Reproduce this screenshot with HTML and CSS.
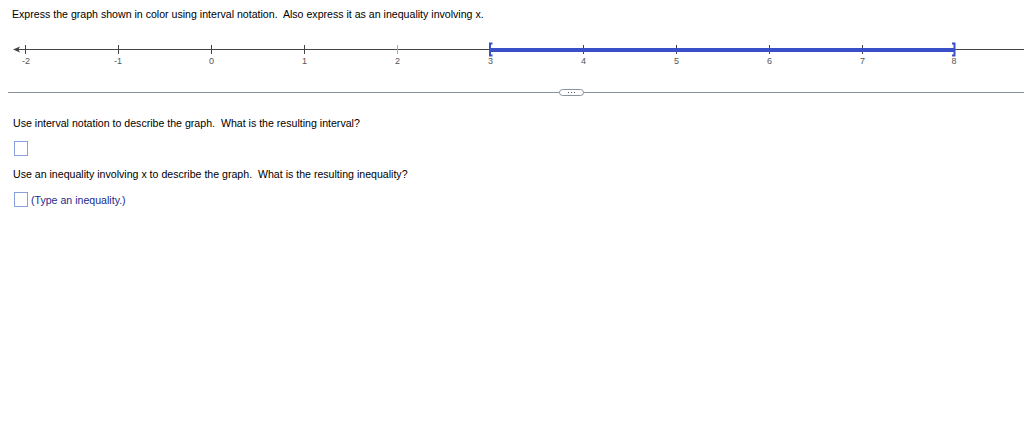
FILE: index.html
```html
<!DOCTYPE html>
<html>
<head>
<meta charset="utf-8">
<link rel="stylesheet" href="styles.css">
</head>
<body>
<div class="page">
  <p class="prompt">Express the graph shown in color using interval notation.&nbsp; Also express it as an inequality involving x.</p>
  <div class="graph">
    <svg width="1024" height="40" viewBox="0 35 1024 40" xmlns="http://www.w3.org/2000/svg">
      <line x1="14" y1="49.5" x2="1024" y2="49.5" stroke="#444" stroke-width="1"/>
      <path d="M13 49.5 L20 46.5 L18.5 49.5 L20 52.5 Z" fill="#444"/>
      <g stroke="#444" stroke-width="1">
        <line x1="25.5" y1="45" x2="25.5" y2="54"/>
        <line x1="118.5" y1="45" x2="118.5" y2="54"/>
        <line x1="211.5" y1="45" x2="211.5" y2="54"/>
        <line x1="304.5" y1="45" x2="304.5" y2="54"/>
        <line x1="397.5" y1="45" x2="397.5" y2="54" stroke="#aaa"/>
        <line x1="583.5" y1="45" x2="583.5" y2="54"/>
        <line x1="676.5" y1="45" x2="676.5" y2="54"/>
        <line x1="769.5" y1="45" x2="769.5" y2="54"/>
        <line x1="862.5" y1="45" x2="862.5" y2="54"/>
      </g>
      <rect x="490" y="48" width="464" height="4" fill="#3a50c8"/>
      <path d="M492.5 43.5 H490 V55.5 H492.5" fill="none" stroke="#3a50c8" stroke-width="2"/>
      <path d="M952 43.5 H954.5 V55.5 H952" fill="none" stroke="#3a50c8" stroke-width="2"/>
      <g class="lbl" text-anchor="middle">
        <text x="26" y="64">-2</text>
        <text x="118" y="64">-1</text>
        <text x="211.5" y="64">0</text>
        <text x="304.5" y="64">1</text>
        <text x="397.5" y="64">2</text>
        <text x="490.5" y="64">3</text>
        <text x="583.5" y="64">4</text>
        <text x="676.5" y="64">5</text>
        <text x="769.5" y="64">6</text>
        <text x="862.5" y="64">7</text>
        <text x="954" y="64">8</text>
      </g>
    </svg>
  </div>
  <div class="divider">
    <span class="more"><i></i><i></i><i></i></span>
  </div>
  <div class="questions">
    <p class="q">Use interval notation to describe the graph.&nbsp; What is the resulting interval?</p>
    <div class="answer"><span class="box"></span></div>
    <p class="q">Use an inequality involving x to describe the graph.&nbsp; What is the resulting inequality?</p>
    <div class="answer"><span class="box"></span><span class="hint">(Type an inequality.)</span></div>
  </div>
</div>
</body>
</html>
```
FILE: styles.css
```css
html, body {
  margin: 0;
  padding: 0;
  background: #fff;
}
body {
  font-family: "Liberation Sans", Arial, sans-serif;
  font-size: 10.6px;
  color: #000;
}
.page {
  width: 1024px;
}
.prompt {
  margin: 0;
  padding: 8px 0 0 12px;
  line-height: 12px;
}
.graph {
  margin-top: 15px;
  height: 40px;
}
.graph svg {
  display: block;
}
.lbl text {
  font-family: "Liberation Sans", Arial, sans-serif;
  font-size: 9px;
  fill: #555;
}
.divider {
  margin-top: 14px;
  position: relative;
  height: 7px;
  display: flex;
  align-items: center;
  justify-content: flex-start;
  margin-left: 8px;
}
.divider::before {
  content: "";
  position: absolute;
  left: 0;
  right: 0;
  top: 3px;
  height: 1px;
  background: #8a94a0;
}
.more {
  position: relative;
  margin-left: 551px;
  width: 23px;
  height: 5px;
  border: 1px solid #8a94a0;
  border-radius: 4px;
  background: #fff;
  display: flex;
  align-items: center;
  justify-content: center;
  gap: 2px;
}
.more i {
  width: 1px;
  height: 1px;
  background: #556;
}
.questions {
  padding: 21px 0 0 13px;
}
.q {
  margin: 0;
  line-height: 12px;
}
.answer {
  display: flex;
  align-items: center;
  margin-top: 12px;
  margin-bottom: 12px;
  padding-left: 1px;
}
.box {
  width: 12px;
  height: 13px;
  border: 1px solid #8aa0dc;
  background: #fff;
}
.hint {
  margin-left: 3px;
  color: #1a2a8c;
}
```
